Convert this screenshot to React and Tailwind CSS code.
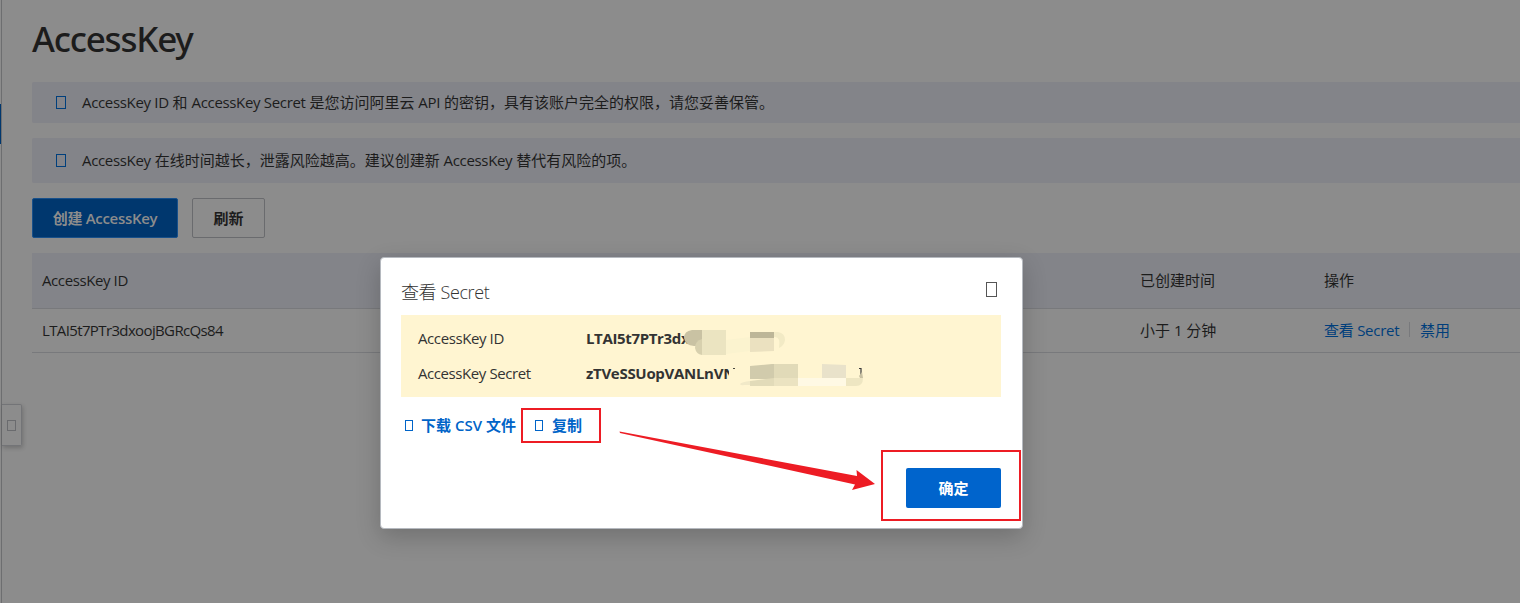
import React from "react";

function Notice({ children, className }) {
  return (
    <div className={`ml-8 flex items-center rounded-l-[2px] bg-[#838489] pl-6 text-[#1c1c1c] ${className}`}>
      <Glyph className="h-[13px] w-[10px] border-[#003f7c]" />
      <p className="ml-4 pb-[2px]">{children}</p>
    </div>
  );
}

function Glyph({ className }) {
  return <span className={`block shrink-0 border ${className}`} />;
}

function Latin({ children }) {
  return <span className="tracking-[-0.33px]">{children}</span>;
}

function Mosaic() {
  return (
    <svg className="absolute left-[283px] top-[14px]" width="182" height="60" viewBox="684 329 182 60" fill="none">
      <path d="M702 330H692Q684 331 684 338Q685 345 694 346H702Z" fill="#c9c2a3" />
      <path d="M702 339Q695 341 695 348Q696 354 702 355Z" fill="#d7d0ae" />
      <path d="M702 330H726V355H702Z" fill="#ebe4c1" />
      <path d="M726 340L750 337V351L726 354Z" fill="#fbf3cf" />
      <path d="M750 332H774V338H750Z" fill="#bdb698" />
      <path d="M750 338H774V351L750 352Z" fill="#ebe1c0" />
      <path d="M774 332H778Q785 333 785 340Q784 346 779 348Q781 336 774 337Z" fill="#f2eac5" />
      <path d="M729 371H742V384H729Z" fill="#fff5d1" />
      <path d="M731 366H742V384H731Z" fill="#fff5d1" />
      <path d="M750 366L772 364H774V379H750Z" fill="#d1cbac" />
      <path d="M774 364H798V379H774Z" fill="#e1dab8" />
      <path d="M740 384Q742 382 750 381V385H744Q741 386 740 384Z" fill="#f1e9c8" />
      <path d="M750 381L774 378V386H750Z" fill="#e2dbb9" />
      <path d="M774 378H798V386H774Z" fill="#ebe3c1" />
      <path d="M798 378H846V386H798Z" fill="#fff9e4" />
      <path d="M822 364L846 365V378H822Z" fill="#e9e2ca" />
      <path d="M846 378H863Q863 386 856 386H846Z" fill="#eee6c2" />
      <path d="M859 368.5H861V376" stroke="#39393a" strokeWidth="1.2" />
      <path d="M859 376L862 372L863 378H860Z" fill="#c9c1a2" />
      <path d="M733 368H735V369H733Z" fill="#4a493f" />
    </svg>
  );
}

function Dialog() {
  return (
    <section className="absolute left-[380px] top-[257px] flex h-[272px] w-[643px] flex-col rounded-[4px] border border-[#b5b9bf] bg-white pl-5 pr-[21px] text-[#333] shadow-[0_8px_24px_0_rgba(0,0,0,0.2)]">
      <header className="flex h-[57px] shrink-0 justify-between">
        <h2 className="pt-[21px] text-[18px] font-light leading-[27px] tracking-[-0.4px]">查看 Secret</h2>
        <Glyph className="mr-[4px] mt-[24px] h-[15px] w-[11px] border-[#555]" />
      </header>
      <div className="relative flex h-[82px] shrink-0 flex-col bg-[#fff5d1] pl-[17px] pt-[5px]">
        <div className="flex h-[35px] items-center">
          <span className="w-[168px] tracking-[-0.4px]">AccessKey ID</span>
          <b className="whitespace-nowrap font-bold tracking-[-0.35px]">LTAI5t7PTr3dx</b>
        </div>
        <div className="flex h-[35px] items-center">
          <span className="w-[168px] tracking-[-0.42px]">AccessKey Secret</span>
          <b className="whitespace-nowrap font-bold tracking-[-0.3px]">zTVeSSUopVANLnVN</b>
        </div>
        <Mosaic />
      </div>
      <div className="mt-[11px] flex h-[35px] shrink-0 items-center font-semibold text-[#0064c8]">
        <Glyph className="ml-[4px] h-[11px] w-[8px] border-[#0064c8]" />
        <span className="ml-[8px] w-[97px] whitespace-nowrap pb-[2px]">下载 CSV 文件</span>
        <div className="ml-[3px] flex h-[35px] w-[80px] items-center border-2 border-[#ed1c24] pl-[12px]">
          <Glyph className="h-[11px] w-[8px] border-[#0064c8]" />
          <span className="ml-[9px] pb-[2px]">复制</span>
        </div>
      </div>
      <div className="-mr-[20px] mt-[7px] flex h-[71px] w-[140px] shrink-0 justify-end self-end border-2 border-[#ed1c24] pr-[18px] pt-4">
        <button className="h-10 w-[95px] rounded-[2px] bg-[#0064cc] font-bold text-white">确定</button>
      </div>
      <svg className="absolute left-[238px] top-[172px]" width="258" height="64" viewBox="619 430 258 64">
        <path d="M619.5 431.5L857 476L856.5 470L875 484L852 490L855 484.5L620 433Z" fill="#ed1c24" />
      </svg>
    </section>
  );
}

export default function App() {
  return (
    <main className="relative flex h-[603px] w-[1520px] overflow-hidden bg-[#8c8c8c] font-['Open_Sans','Noto_Sans_CJK_SC',sans-serif] text-[15px] font-normal leading-[22px]">
      <aside className="flex w-[2px] shrink-0 flex-col border-r border-[#6d6e70] pt-[104px]">
        <div className="h-10 bg-[#00376e]" />
      </aside>
      <div className="-ml-[2px] flex min-w-0 flex-1 flex-col">
        <h1 className="ml-8 mt-[13px] h-[69px] font-['Noto_Sans',sans-serif] text-[35px] font-medium leading-[52px] tracking-[-1.2px] text-[#1c1c1c]">AccessKey</h1>
        <Notice className="h-[41px]">
          <Latin>AccessKey ID</Latin> 和 <Latin>AccessKey Secret</Latin> 是您访问阿里云 <Latin>API</Latin> 的密钥，具有该账户完全的权限，请您妥善保管。
        </Notice>
        <Notice className="mt-[15px] h-[45px]">
          <Latin>AccessKey</Latin> 在线时间越长，泄露风险越高。建议创建新 <Latin>AccessKey</Latin> 替代有风险的项。
        </Notice>
        <div className="ml-8 mt-[15px] flex gap-[14px] font-semibold">
          <button className="h-10 w-[146px] rounded-[2px] border border-[#18508a] bg-[#00376e] tracking-[-0.3px] text-[#8c8c8c]">创建 AccessKey</button>
          <button className="h-10 w-[73px] rounded-[2px] border border-[#6a6b6e] text-[#1c1c1c]">刷新</button>
        </div>
        <div className="ml-8 mt-[15px] text-[#1c1c1c]">
          <div className="grid h-[56px] grid-cols-[1098px_184px_1fr] items-center border-b border-[#78797c] bg-[#838489] pb-[2px] pl-[10px]">
            <span className="tracking-[-0.4px]">AccessKey ID</span>
            <span>已创建时间</span>
            <span>操作</span>
          </div>
          <div className="grid h-[44px] grid-cols-[1098px_184px_1fr] items-center border-b border-[#78797c] pb-[2px] pl-[10px]">
            <span className="tracking-[-0.63px]">LTAI5t7PTr3dxoojBGRcQs84</span>
            <span>小于 1 分钟</span>
            <div className="flex items-center text-[#003e7b]">
              <span className="w-[75px] whitespace-nowrap tracking-[-0.25px]">查看 Secret</span>
              <i className="ml-[10px] mr-[10px] h-[15px] w-px bg-[#78797c]" />
              <span>禁用</span>
            </div>
          </div>
        </div>
        <div className="ml-[2px] mt-[51px] flex h-[42px] w-5 items-center rounded-r-[2px] border border-l-0 border-[#737477] pl-[5px] shadow-[1px_2px_4px_rgba(0,0,0,0.2)]">
          <Glyph className="h-[11px] w-[9px] border-[#6a6b6e]" />
        </div>
      </div>
      <Dialog />
    </main>
  );
}
